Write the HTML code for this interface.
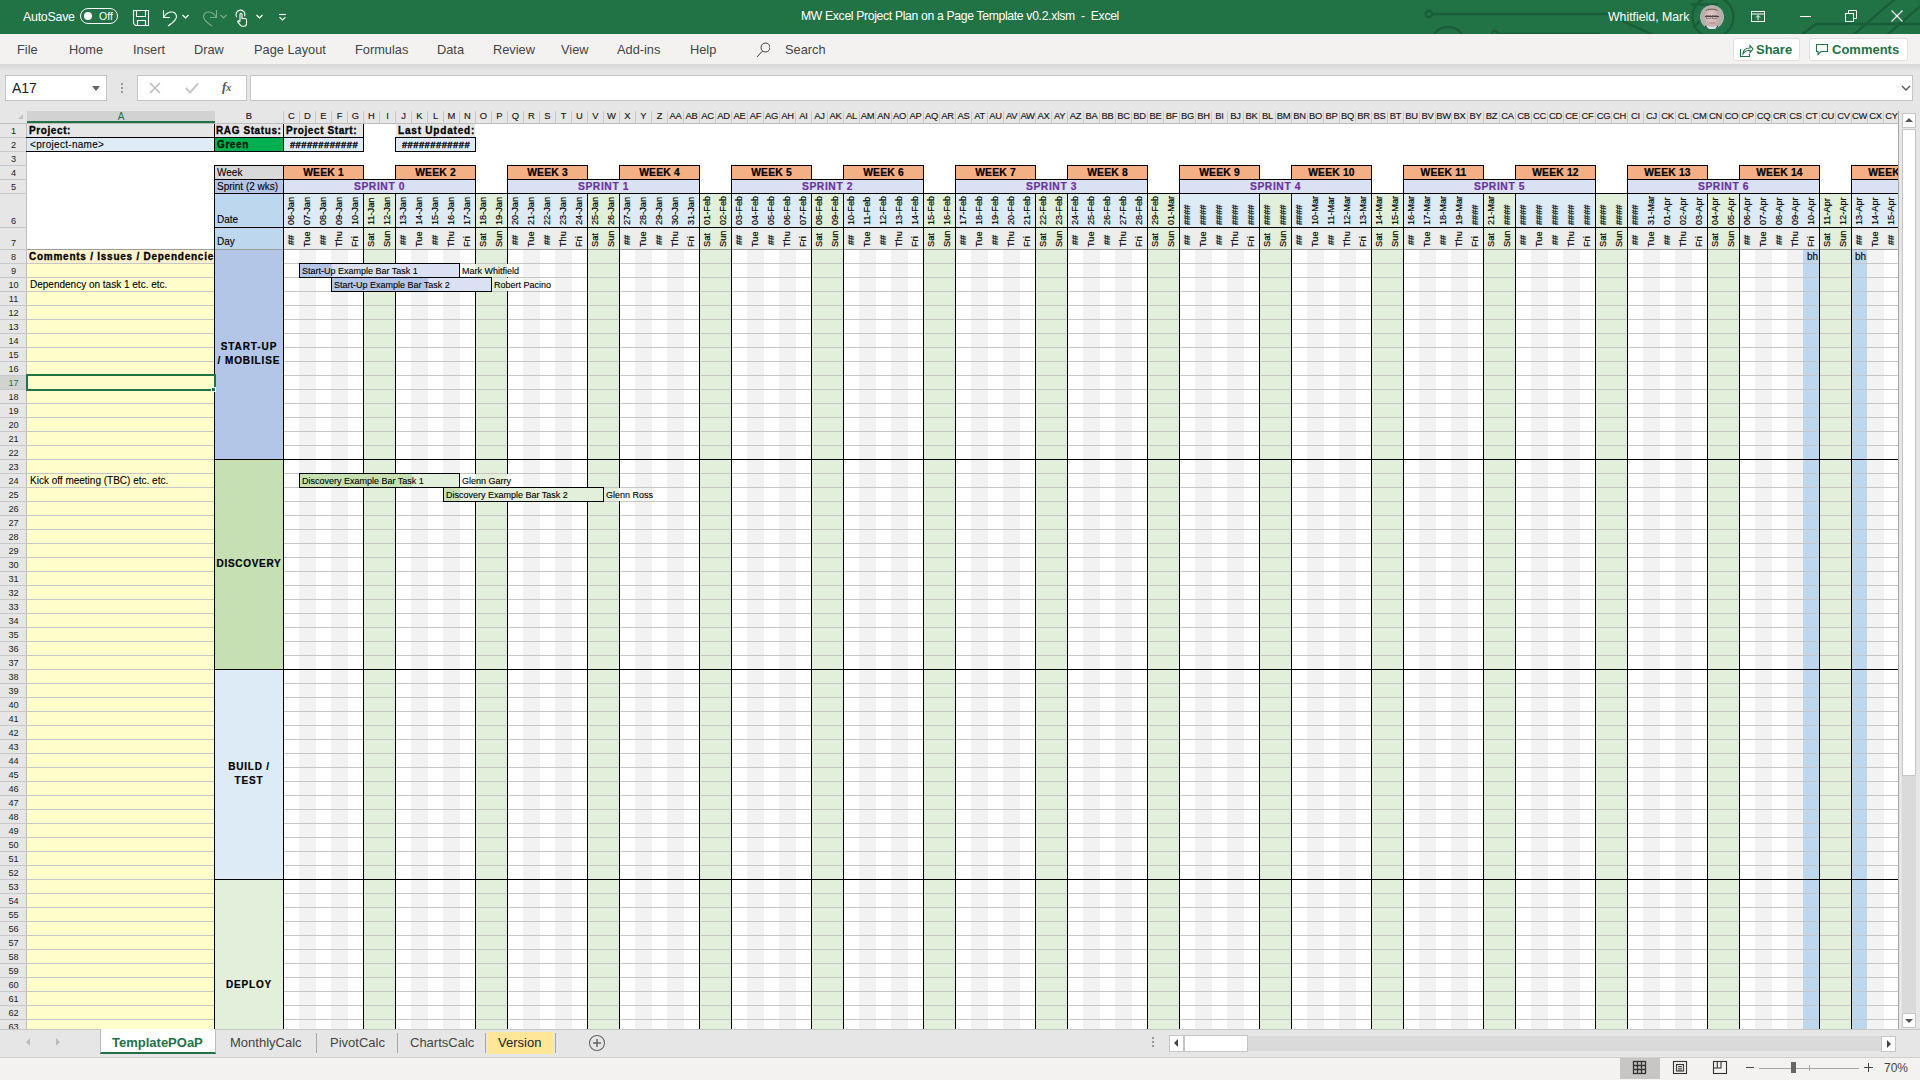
<!DOCTYPE html><html><head><meta charset="utf-8"><style>
*{margin:0;padding:0;box-sizing:border-box}
html,body{width:1920px;height:1080px;overflow:hidden;background:#e6e6e6;font-family:"Liberation Sans",sans-serif}
div{position:absolute}
.ui{font-family:"Liberation Sans",sans-serif}
.ch{top:111px;height:12px;font-size:9.4px;line-height:10.5px;text-align:center;color:#111;border-right:1px solid #c8c8c8;overflow:hidden;white-space:nowrap;-webkit-text-stroke:0.12px #111}
.ch2{letter-spacing:-0.3px}
.rh{left:0;width:27px;font-size:9.2px;text-align:center;color:#222;border-bottom:1px solid #c8c8c8}
.c{font-size:10px;line-height:13px;white-space:nowrap;overflow:hidden;color:#000;-webkit-text-stroke:0.1px #000}
.b{font-weight:bold;letter-spacing:0.6px;-webkit-text-stroke:0.3px #000}
.vl{width:1px;background:#000}
.rot{-webkit-text-stroke:0.15px #000;writing-mode:vertical-rl;transform:rotate(180deg);font-size:9.2px;white-space:nowrap;text-align:left;line-height:16px;color:#000}
</style></head><body>
<div style="left:0px;top:0px;width:1920px;height:34px;background:#217346"></div>
<svg style="position:absolute;left:0;top:0" width="1920" height="34"><g stroke="#1b5d3a" stroke-width="2.4" fill="none"><circle cx="1429" cy="14" r="3.2"/><path d="M1432.5 14 H1607 L1660 38"/><circle cx="1448" cy="44" r="17"/><circle cx="1495" cy="34" r="3"/><path d="M1498 34 H1600"/><circle cx="1713" cy="17" r="20.5"/><path d="M1691 4.5 H1716 L1693 28"/><path d="M1800 36 L1816 24 H1920"/><path d="M1896 -2 L1852 36"/><path d="M1925 2 L1886 36"/></g></svg>
<div style="left:23px;top:9px;font-size:12.4px;letter-spacing:-0.25px;color:#fff;line-height:16px">AutoSave</div>
<div style="left:80px;top:8px;width:38px;height:16px;border:1px solid #fff;border-radius:8px"></div>
<div style="left:84px;top:12px;width:8px;height:8px;border-radius:50%;background:#fff"></div>
<div style="left:99px;top:9px;font-size:10.5px;color:#fff;line-height:14px">Off</div>
<svg style="position:absolute;left:130px;top:7px" width="22" height="22" viewBox="0 0 22 22"><g fill="none" stroke="#fff" stroke-width="1.1"><path d="M3.5 3.5 H18.5 V18.5 H5.5 L3.5 16.5 Z"/><path d="M6.5 3.5 V9.5 H15.5 V3.5"/><path d="M7.5 18.5 V13.5 H15.5 V18.5"/></g></svg>
<svg style="position:absolute;left:160px;top:7px" width="20" height="22" viewBox="0 0 20 22"><g fill="none" stroke="#fff" stroke-width="1.1"><path d="M3.5 3 V10.5 H10"/><path d="M4 10 C7 4 15 3 16.5 9 C17 12 14 15 8 19"/></g></svg>
<svg style="position:absolute;left:181px;top:13px" width="10" height="8"><path d="M1.5 2 L4.5 5 L7.5 2" fill="none" stroke="#fff" stroke-width="1.2"/></svg>
<svg style="position:absolute;left:200px;top:7px;opacity:0.4" width="20" height="22" viewBox="0 0 20 22"><g fill="none" stroke="#fff" stroke-width="1.1"><path d="M16.5 3 V10.5 H10"/><path d="M16 10 C13 4 5 3 3.5 9 C3 12 6 15 12 19"/></g></svg>
<svg style="position:absolute;left:219px;top:13px;opacity:0.4" width="10" height="8"><path d="M1.5 2 L4.5 5 L7.5 2" fill="none" stroke="#fff" stroke-width="1.2"/></svg>
<svg style="position:absolute;left:233px;top:7px" width="18" height="22" viewBox="0 0 18 22"><g fill="none" stroke="#fff" stroke-width="1.1" stroke-linejoin="round"><path d="M3.8 10.2 A4.5 4.5 0 1 1 11.6 9.4"/><path d="M7 14.5 V7.3 Q7 6.2 8 6.2 Q9 6.2 9 7.3 V11.5 H12.3 Q13.5 11.5 13.5 12.7 V16.8 Q13.5 19.2 11 19.2 H9.2 Q8.2 19.2 7.6 18.4 L4.9 15.2 Q4.4 14.4 5.2 14 Q5.9 13.7 6.4 14.2 L7 14.8"/></g></svg>
<svg style="position:absolute;left:255px;top:13px" width="10" height="8"><path d="M1.5 2 L4.5 5 L7.5 2" fill="none" stroke="#fff" stroke-width="1.2"/></svg>
<svg style="position:absolute;left:276px;top:9px" width="12" height="14"><g fill="none" stroke="#fff" stroke-width="1.1"><path d="M3 5.5 H10"/><path d="M3.5 8.2 L6.5 11 L9.5 8.2"/></g></svg>
<div style="left:801px;top:8px;font-size:12.2px;letter-spacing:-0.33px;color:#fff;line-height:16px"><span>MW Excel Project Plan on a Page Template v0.2.xlsm&nbsp; -&nbsp; Excel</span></div>
<div style="left:1608px;top:9px;font-size:12.3px;color:#fff;line-height:16px">Whitfield, Mark</div>
<svg style="position:absolute;left:1700px;top:5px" width="24" height="24"><defs><clipPath id="av"><circle cx="12" cy="12" r="12"/></clipPath><radialGradient id="fg" cx="0.45" cy="0.45" r="0.6"><stop offset="0" stop-color="#e2cccc"/><stop offset="1" stop-color="#c9a9a6"/></radialGradient></defs><g clip-path="url(#av)"><rect width="24" height="24" fill="#b3b1ae"/><ellipse cx="11.8" cy="12" rx="6.8" ry="9.5" fill="url(#fg)"/><path d="M5.5 6 C6 3 17 2.5 18 6 C16 4.5 8 4.5 5.5 6Z" fill="#7a6e6a"/><path d="M5 11.5 H19" stroke="#4a3a3a" stroke-width="1.2"/><rect x="6.5" y="10.5" width="4.5" height="3" fill="none" stroke="#6a5555" stroke-width="0.6"/><rect x="12.5" y="10.5" width="4.5" height="3" fill="none" stroke="#6a5555" stroke-width="0.6"/><path d="M9 18 H15" stroke="#b08080" stroke-width="1"/><path d="M3 24 C5 20 8 21 12 22 C16 21 19 20 21 24Z" fill="#dde0ee"/><path d="M5 21 L8 24 M18 21 L16 24" stroke="#223" stroke-width="1.3"/></g></svg>
<svg style="position:absolute;left:1750px;top:9px" width="16" height="16"><g fill="none" stroke="#fff" stroke-width="1"><rect x="1.5" y="2.5" width="13" height="10"/><path d="M1.5 5 H14.5"/><path d="M8 11 V6.5 M6 8.5 L8 6.5 L10 8.5"/></g></svg>
<div style="left:1800px;top:16px;width:11px;height:1px;background:#fff"></div>
<svg style="position:absolute;left:1844px;top:9px" width="14" height="14"><g fill="none" stroke="#fff" stroke-width="1"><rect x="1.5" y="4.5" width="8" height="8"/><path d="M4.5 4.5 V1.5 H12.5 V9.5 H9.5"/></g></svg>
<svg style="position:absolute;left:1890px;top:9px" width="14" height="14"><g fill="none" stroke="#fff" stroke-width="1.1"><path d="M1.5 1.5 L12.5 12.5 M12.5 1.5 L1.5 12.5"/></g></svg>
<div style="left:0px;top:34px;width:1920px;height:30px;background:#f3f2f1"></div>
<div style="left:0px;top:64px;width:1920px;height:7px;background:linear-gradient(#d6d6d6,#e6e6e6)"></div>
<div style="left:17px;top:41px;font-size:12.8px;color:#444;line-height:18px">File</div>
<div style="left:69px;top:41px;font-size:12.8px;color:#444;line-height:18px">Home</div>
<div style="left:133px;top:41px;font-size:12.8px;color:#444;line-height:18px">Insert</div>
<div style="left:194px;top:41px;font-size:12.8px;color:#444;line-height:18px">Draw</div>
<div style="left:254px;top:41px;font-size:12.8px;color:#444;line-height:18px">Page Layout</div>
<div style="left:355px;top:41px;font-size:12.8px;color:#444;line-height:18px">Formulas</div>
<div style="left:437px;top:41px;font-size:12.8px;color:#444;line-height:18px">Data</div>
<div style="left:493px;top:41px;font-size:12.8px;color:#444;line-height:18px">Review</div>
<div style="left:561px;top:41px;font-size:12.8px;color:#444;line-height:18px">View</div>
<div style="left:617px;top:41px;font-size:12.8px;color:#444;line-height:18px">Add-ins</div>
<div style="left:690px;top:41px;font-size:12.8px;color:#444;line-height:18px">Help</div>
<div style="left:785px;top:41px;font-size:12.8px;color:#444;line-height:18px">Search</div>
<svg style="position:absolute;left:754px;top:40px" width="16" height="18"><g fill="none" stroke="#3b3a39" stroke-width="1"><circle cx="11.5" cy="7.5" r="4.5"/><path d="M8.5 11 L3 17"/></g></svg>
<div style="left:1733px;top:38px;width:67px;height:23px;background:#fff;border:1px solid #e1dfdd;border-radius:3px"></div>
<div style="left:1756px;top:41px;font-size:13px;font-weight:bold;color:#217346;line-height:17px">Share</div>
<svg style="position:absolute;left:1738px;top:42px" width="16" height="16"><g fill="none" stroke="#217346" stroke-width="1.1"><path d="M2.5 7 V14.5 H11.5 V12"/><path d="M5 12 C5 8 8 6 12 6 V3.5 L15 7 L12 10.5 V8.3 C9 8.3 6.5 9.5 5 12Z"/></g></svg>
<div style="left:1809px;top:38px;width:99px;height:23px;background:#fff;border:1px solid #e1dfdd;border-radius:3px"></div>
<div style="left:1832px;top:41px;font-size:13px;font-weight:bold;color:#217346;line-height:17px">Comments</div>
<svg style="position:absolute;left:1815px;top:42px" width="16" height="16"><g fill="none" stroke="#217346" stroke-width="1.1"><path d="M1.5 2.5 H12.5 V9.5 H6 L3 12.5 V9.5 H1.5 Z"/></g></svg>
<div style="left:5px;top:75px;width:102px;height:26px;background:#fff;border:1px solid #c6c6c6"></div>
<div style="left:12px;top:80px;font-size:14px;color:#222;line-height:17px">A17</div>
<div style="left:92px;top:86px;width:0;height:0;border-left:4.5px solid transparent;border-right:4.5px solid transparent;border-top:5px solid #666"></div>
<div style="left:121px;top:83px;width:2px;height:2px;background:#999"></div>
<div style="left:121px;top:87px;width:2px;height:2px;background:#999"></div>
<div style="left:121px;top:91px;width:2px;height:2px;background:#999"></div>
<div style="left:137px;top:75px;width:110px;height:26px;background:#fff;border:1px solid #c6c6c6"></div>
<svg style="position:absolute;left:149px;top:82px" width="12" height="12"><path d="M1 1 L11 11 M11 1 L1 11" stroke="#bdbdbd" stroke-width="1.5" fill="none"/></svg>
<svg style="position:absolute;left:185px;top:82px" width="14" height="12"><path d="M1 6 L5 10.5 L13 1.5" stroke="#cacaca" stroke-width="2.3" fill="none"/></svg>
<div style="left:222px;top:79px;font-size:13px;font-style:italic;font-weight:bold;font-family:'Liberation Serif',serif;color:#555;line-height:16px">f<span style="font-size:10px">x</span></div>
<div style="left:250px;top:75px;width:1663px;height:26px;background:#fff;border:1px solid #c6c6c6"></div>
<svg style="position:absolute;left:1900px;top:84px" width="12" height="8"><path d="M2 2 L6 6 L10 2" stroke="#555" stroke-width="1.4" fill="none"/></svg>
<div style="left:27px;top:124px;width:1871px;height:905px;background:#fff"></div>
<div style="left:0px;top:111px;width:1898px;height:12px;background:#e6e6e6"></div>
<div style="left:27px;top:111px;width:188px;height:12px;background:#d2d2d2;border-bottom:2px solid #217346;color:#217346;font-size:10px;line-height:11px;text-align:center">A</div>
<div style="left:215px;top:111px;width:69px;height:12px;border-right:1px solid #c8c8c8;font-size:9.4px;line-height:10.5px;text-align:center;color:#111;-webkit-text-stroke:0.12px #111">B</div>
<div class="ch" style="left:284px;width:16px">C</div>
<div class="ch" style="left:300px;width:16px">D</div>
<div class="ch" style="left:316px;width:16px">E</div>
<div class="ch" style="left:332px;width:16px">F</div>
<div class="ch" style="left:348px;width:16px">G</div>
<div class="ch" style="left:364px;width:16px">H</div>
<div class="ch" style="left:380px;width:16px">I</div>
<div class="ch" style="left:396px;width:16px">J</div>
<div class="ch" style="left:412px;width:16px">K</div>
<div class="ch" style="left:428px;width:16px">L</div>
<div class="ch" style="left:444px;width:16px">M</div>
<div class="ch" style="left:460px;width:16px">N</div>
<div class="ch" style="left:476px;width:16px">O</div>
<div class="ch" style="left:492px;width:16px">P</div>
<div class="ch" style="left:508px;width:16px">Q</div>
<div class="ch" style="left:524px;width:16px">R</div>
<div class="ch" style="left:540px;width:16px">S</div>
<div class="ch" style="left:556px;width:16px">T</div>
<div class="ch" style="left:572px;width:16px">U</div>
<div class="ch" style="left:588px;width:16px">V</div>
<div class="ch" style="left:604px;width:16px">W</div>
<div class="ch" style="left:620px;width:16px">X</div>
<div class="ch" style="left:636px;width:16px">Y</div>
<div class="ch" style="left:652px;width:16px">Z</div>
<div class="ch ch2" style="left:668px;width:16px">AA</div>
<div class="ch ch2" style="left:684px;width:16px">AB</div>
<div class="ch ch2" style="left:700px;width:16px">AC</div>
<div class="ch ch2" style="left:716px;width:16px">AD</div>
<div class="ch ch2" style="left:732px;width:16px">AE</div>
<div class="ch ch2" style="left:748px;width:16px">AF</div>
<div class="ch ch2" style="left:764px;width:16px">AG</div>
<div class="ch ch2" style="left:780px;width:16px">AH</div>
<div class="ch ch2" style="left:796px;width:16px">AI</div>
<div class="ch ch2" style="left:812px;width:16px">AJ</div>
<div class="ch ch2" style="left:828px;width:16px">AK</div>
<div class="ch ch2" style="left:844px;width:16px">AL</div>
<div class="ch ch2" style="left:860px;width:16px">AM</div>
<div class="ch ch2" style="left:876px;width:16px">AN</div>
<div class="ch ch2" style="left:892px;width:16px">AO</div>
<div class="ch ch2" style="left:908px;width:16px">AP</div>
<div class="ch ch2" style="left:924px;width:16px">AQ</div>
<div class="ch ch2" style="left:940px;width:16px">AR</div>
<div class="ch ch2" style="left:956px;width:16px">AS</div>
<div class="ch ch2" style="left:972px;width:16px">AT</div>
<div class="ch ch2" style="left:988px;width:16px">AU</div>
<div class="ch ch2" style="left:1004px;width:16px">AV</div>
<div class="ch ch2" style="left:1020px;width:16px">AW</div>
<div class="ch ch2" style="left:1036px;width:16px">AX</div>
<div class="ch ch2" style="left:1052px;width:16px">AY</div>
<div class="ch ch2" style="left:1068px;width:16px">AZ</div>
<div class="ch ch2" style="left:1084px;width:16px">BA</div>
<div class="ch ch2" style="left:1100px;width:16px">BB</div>
<div class="ch ch2" style="left:1116px;width:16px">BC</div>
<div class="ch ch2" style="left:1132px;width:16px">BD</div>
<div class="ch ch2" style="left:1148px;width:16px">BE</div>
<div class="ch ch2" style="left:1164px;width:16px">BF</div>
<div class="ch ch2" style="left:1180px;width:16px">BG</div>
<div class="ch ch2" style="left:1196px;width:16px">BH</div>
<div class="ch ch2" style="left:1212px;width:16px">BI</div>
<div class="ch ch2" style="left:1228px;width:16px">BJ</div>
<div class="ch ch2" style="left:1244px;width:16px">BK</div>
<div class="ch ch2" style="left:1260px;width:16px">BL</div>
<div class="ch ch2" style="left:1276px;width:16px">BM</div>
<div class="ch ch2" style="left:1292px;width:16px">BN</div>
<div class="ch ch2" style="left:1308px;width:16px">BO</div>
<div class="ch ch2" style="left:1324px;width:16px">BP</div>
<div class="ch ch2" style="left:1340px;width:16px">BQ</div>
<div class="ch ch2" style="left:1356px;width:16px">BR</div>
<div class="ch ch2" style="left:1372px;width:16px">BS</div>
<div class="ch ch2" style="left:1388px;width:16px">BT</div>
<div class="ch ch2" style="left:1404px;width:16px">BU</div>
<div class="ch ch2" style="left:1420px;width:16px">BV</div>
<div class="ch ch2" style="left:1436px;width:16px">BW</div>
<div class="ch ch2" style="left:1452px;width:16px">BX</div>
<div class="ch ch2" style="left:1468px;width:16px">BY</div>
<div class="ch ch2" style="left:1484px;width:16px">BZ</div>
<div class="ch ch2" style="left:1500px;width:16px">CA</div>
<div class="ch ch2" style="left:1516px;width:16px">CB</div>
<div class="ch ch2" style="left:1532px;width:16px">CC</div>
<div class="ch ch2" style="left:1548px;width:16px">CD</div>
<div class="ch ch2" style="left:1564px;width:16px">CE</div>
<div class="ch ch2" style="left:1580px;width:16px">CF</div>
<div class="ch ch2" style="left:1596px;width:16px">CG</div>
<div class="ch ch2" style="left:1612px;width:16px">CH</div>
<div class="ch ch2" style="left:1628px;width:16px">CI</div>
<div class="ch ch2" style="left:1644px;width:16px">CJ</div>
<div class="ch ch2" style="left:1660px;width:16px">CK</div>
<div class="ch ch2" style="left:1676px;width:16px">CL</div>
<div class="ch ch2" style="left:1692px;width:16px">CM</div>
<div class="ch ch2" style="left:1708px;width:16px">CN</div>
<div class="ch ch2" style="left:1724px;width:16px">CO</div>
<div class="ch ch2" style="left:1740px;width:16px">CP</div>
<div class="ch ch2" style="left:1756px;width:16px">CQ</div>
<div class="ch ch2" style="left:1772px;width:16px">CR</div>
<div class="ch ch2" style="left:1788px;width:16px">CS</div>
<div class="ch ch2" style="left:1804px;width:16px">CT</div>
<div class="ch ch2" style="left:1820px;width:16px">CU</div>
<div class="ch ch2" style="left:1836px;width:16px">CV</div>
<div class="ch ch2" style="left:1852px;width:16px">CW</div>
<div class="ch ch2" style="left:1868px;width:16px">CX</div>
<div class="ch ch2" style="left:1884px;width:16px">CY</div>
<div style="left:0px;top:123px;width:1898px;height:1px;background:#bdbdbd"></div>
<div style="left:18px;top:114px;width:0;height:0;border-left:5px solid transparent;border-bottom:5px solid #c2c2c2"></div>
<div style="left:0px;top:124px;width:27px;height:905px;background:#e6e6e6;border-right:1px solid #bdbdbd"></div>
<div class="rh" style="top:124px;height:14px;line-height:15px;">1</div>
<div class="rh" style="top:138px;height:14px;line-height:15px;">2</div>
<div class="rh" style="top:152px;height:14px;line-height:15px;">3</div>
<div class="rh" style="top:166px;height:14px;line-height:15px;">4</div>
<div class="rh" style="top:180px;height:14px;line-height:15px;">5</div>
<div class="rh" style="top:194px;height:34px;line-height:34px;padding-top:20px;line-height:14px;">6</div>
<div class="rh" style="top:228px;height:22px;line-height:22px;padding-top:8px;line-height:14px;">7</div>
<div class="rh" style="top:250px;height:14px;line-height:15px;">8</div>
<div class="rh" style="top:264px;height:14px;line-height:15px;">9</div>
<div class="rh" style="top:278px;height:14px;line-height:15px;">10</div>
<div class="rh" style="top:292px;height:14px;line-height:15px;">11</div>
<div class="rh" style="top:306px;height:14px;line-height:15px;">12</div>
<div class="rh" style="top:320px;height:14px;line-height:15px;">13</div>
<div class="rh" style="top:334px;height:14px;line-height:15px;">14</div>
<div class="rh" style="top:348px;height:14px;line-height:15px;">15</div>
<div class="rh" style="top:362px;height:14px;line-height:15px;">16</div>
<div class="rh" style="top:376px;height:14px;line-height:15px;background:#d2d2d2;color:#217346;">17</div>
<div class="rh" style="top:390px;height:14px;line-height:15px;">18</div>
<div class="rh" style="top:404px;height:14px;line-height:15px;">19</div>
<div class="rh" style="top:418px;height:14px;line-height:15px;">20</div>
<div class="rh" style="top:432px;height:14px;line-height:15px;">21</div>
<div class="rh" style="top:446px;height:14px;line-height:15px;">22</div>
<div class="rh" style="top:460px;height:14px;line-height:15px;">23</div>
<div class="rh" style="top:474px;height:14px;line-height:15px;">24</div>
<div class="rh" style="top:488px;height:14px;line-height:15px;">25</div>
<div class="rh" style="top:502px;height:14px;line-height:15px;">26</div>
<div class="rh" style="top:516px;height:14px;line-height:15px;">27</div>
<div class="rh" style="top:530px;height:14px;line-height:15px;">28</div>
<div class="rh" style="top:544px;height:14px;line-height:15px;">29</div>
<div class="rh" style="top:558px;height:14px;line-height:15px;">30</div>
<div class="rh" style="top:572px;height:14px;line-height:15px;">31</div>
<div class="rh" style="top:586px;height:14px;line-height:15px;">32</div>
<div class="rh" style="top:600px;height:14px;line-height:15px;">33</div>
<div class="rh" style="top:614px;height:14px;line-height:15px;">34</div>
<div class="rh" style="top:628px;height:14px;line-height:15px;">35</div>
<div class="rh" style="top:642px;height:14px;line-height:15px;">36</div>
<div class="rh" style="top:656px;height:14px;line-height:15px;">37</div>
<div class="rh" style="top:670px;height:14px;line-height:15px;">38</div>
<div class="rh" style="top:684px;height:14px;line-height:15px;">39</div>
<div class="rh" style="top:698px;height:14px;line-height:15px;">40</div>
<div class="rh" style="top:712px;height:14px;line-height:15px;">41</div>
<div class="rh" style="top:726px;height:14px;line-height:15px;">42</div>
<div class="rh" style="top:740px;height:14px;line-height:15px;">43</div>
<div class="rh" style="top:754px;height:14px;line-height:15px;">44</div>
<div class="rh" style="top:768px;height:14px;line-height:15px;">45</div>
<div class="rh" style="top:782px;height:14px;line-height:15px;">46</div>
<div class="rh" style="top:796px;height:14px;line-height:15px;">47</div>
<div class="rh" style="top:810px;height:14px;line-height:15px;">48</div>
<div class="rh" style="top:824px;height:14px;line-height:15px;">49</div>
<div class="rh" style="top:838px;height:14px;line-height:15px;">50</div>
<div class="rh" style="top:852px;height:14px;line-height:15px;">51</div>
<div class="rh" style="top:866px;height:14px;line-height:15px;">52</div>
<div class="rh" style="top:880px;height:14px;line-height:15px;">53</div>
<div class="rh" style="top:894px;height:14px;line-height:15px;">54</div>
<div class="rh" style="top:908px;height:14px;line-height:15px;">55</div>
<div class="rh" style="top:922px;height:14px;line-height:15px;">56</div>
<div class="rh" style="top:936px;height:14px;line-height:15px;">57</div>
<div class="rh" style="top:950px;height:14px;line-height:15px;">58</div>
<div class="rh" style="top:964px;height:14px;line-height:15px;">59</div>
<div class="rh" style="top:978px;height:14px;line-height:15px;">60</div>
<div class="rh" style="top:992px;height:14px;line-height:15px;">61</div>
<div class="rh" style="top:1006px;height:14px;line-height:15px;">62</div>
<div class="rh" style="top:1020px;height:14px;line-height:15px;">63</div>
<div style="left:0;top:0;width:1898px;height:1029px;overflow:hidden">
<div style="left:299px;top:250px;width:17px;height:779px;background:#f2f2f2"></div>
<div style="left:331px;top:250px;width:17px;height:779px;background:#f2f2f2"></div>
<div style="left:363px;top:250px;width:16px;height:779px;background:#e2efda"></div>
<div style="left:379px;top:250px;width:16px;height:779px;background:#e2efda"></div>
<div style="left:411px;top:250px;width:17px;height:779px;background:#f2f2f2"></div>
<div style="left:443px;top:250px;width:17px;height:779px;background:#f2f2f2"></div>
<div style="left:475px;top:250px;width:16px;height:779px;background:#e2efda"></div>
<div style="left:491px;top:250px;width:16px;height:779px;background:#e2efda"></div>
<div style="left:523px;top:250px;width:17px;height:779px;background:#f2f2f2"></div>
<div style="left:555px;top:250px;width:17px;height:779px;background:#f2f2f2"></div>
<div style="left:587px;top:250px;width:16px;height:779px;background:#e2efda"></div>
<div style="left:603px;top:250px;width:16px;height:779px;background:#e2efda"></div>
<div style="left:635px;top:250px;width:17px;height:779px;background:#f2f2f2"></div>
<div style="left:667px;top:250px;width:17px;height:779px;background:#f2f2f2"></div>
<div style="left:699px;top:250px;width:16px;height:779px;background:#e2efda"></div>
<div style="left:715px;top:250px;width:16px;height:779px;background:#e2efda"></div>
<div style="left:747px;top:250px;width:17px;height:779px;background:#f2f2f2"></div>
<div style="left:779px;top:250px;width:17px;height:779px;background:#f2f2f2"></div>
<div style="left:811px;top:250px;width:16px;height:779px;background:#e2efda"></div>
<div style="left:827px;top:250px;width:16px;height:779px;background:#e2efda"></div>
<div style="left:859px;top:250px;width:17px;height:779px;background:#f2f2f2"></div>
<div style="left:891px;top:250px;width:17px;height:779px;background:#f2f2f2"></div>
<div style="left:923px;top:250px;width:16px;height:779px;background:#e2efda"></div>
<div style="left:939px;top:250px;width:16px;height:779px;background:#e2efda"></div>
<div style="left:971px;top:250px;width:17px;height:779px;background:#f2f2f2"></div>
<div style="left:1003px;top:250px;width:17px;height:779px;background:#f2f2f2"></div>
<div style="left:1035px;top:250px;width:16px;height:779px;background:#e2efda"></div>
<div style="left:1051px;top:250px;width:16px;height:779px;background:#e2efda"></div>
<div style="left:1083px;top:250px;width:17px;height:779px;background:#f2f2f2"></div>
<div style="left:1115px;top:250px;width:17px;height:779px;background:#f2f2f2"></div>
<div style="left:1147px;top:250px;width:16px;height:779px;background:#e2efda"></div>
<div style="left:1163px;top:250px;width:16px;height:779px;background:#e2efda"></div>
<div style="left:1195px;top:250px;width:17px;height:779px;background:#f2f2f2"></div>
<div style="left:1227px;top:250px;width:17px;height:779px;background:#f2f2f2"></div>
<div style="left:1259px;top:250px;width:16px;height:779px;background:#e2efda"></div>
<div style="left:1275px;top:250px;width:16px;height:779px;background:#e2efda"></div>
<div style="left:1307px;top:250px;width:17px;height:779px;background:#f2f2f2"></div>
<div style="left:1339px;top:250px;width:17px;height:779px;background:#f2f2f2"></div>
<div style="left:1371px;top:250px;width:16px;height:779px;background:#e2efda"></div>
<div style="left:1387px;top:250px;width:16px;height:779px;background:#e2efda"></div>
<div style="left:1419px;top:250px;width:17px;height:779px;background:#f2f2f2"></div>
<div style="left:1451px;top:250px;width:17px;height:779px;background:#f2f2f2"></div>
<div style="left:1483px;top:250px;width:16px;height:779px;background:#e2efda"></div>
<div style="left:1499px;top:250px;width:16px;height:779px;background:#e2efda"></div>
<div style="left:1531px;top:250px;width:17px;height:779px;background:#f2f2f2"></div>
<div style="left:1563px;top:250px;width:17px;height:779px;background:#f2f2f2"></div>
<div style="left:1595px;top:250px;width:16px;height:779px;background:#e2efda"></div>
<div style="left:1611px;top:250px;width:16px;height:779px;background:#e2efda"></div>
<div style="left:1643px;top:250px;width:17px;height:779px;background:#f2f2f2"></div>
<div style="left:1675px;top:250px;width:17px;height:779px;background:#f2f2f2"></div>
<div style="left:1707px;top:250px;width:16px;height:779px;background:#e2efda"></div>
<div style="left:1723px;top:250px;width:16px;height:779px;background:#e2efda"></div>
<div style="left:1755px;top:250px;width:17px;height:779px;background:#f2f2f2"></div>
<div style="left:1787px;top:250px;width:17px;height:779px;background:#f2f2f2"></div>
<div style="left:1803px;top:250px;width:16px;height:779px;background:#bdd7ee"></div>
<div style="left:1819px;top:250px;width:16px;height:779px;background:#e2efda"></div>
<div style="left:1835px;top:250px;width:16px;height:779px;background:#e2efda"></div>
<div style="left:1851px;top:250px;width:16px;height:779px;background:#bdd7ee"></div>
<div style="left:1867px;top:250px;width:17px;height:779px;background:#f2f2f2"></div>
<div style="left:27px;top:250px;width:187px;height:779px;background:#ffffcc"></div>
<div style="left:27px;top:250px;width:187px;height:13px;background:#fff2cc"></div>
<div style="left:214px;top:249px;width:70px;height:210px;background:#b4c6e7;border-left:1px solid #000;border-right:1px solid #000"></div>
<div style="left:214px;top:459px;width:70px;height:210px;background:#c6e0b4;border-left:1px solid #000;border-right:1px solid #000"></div>
<div style="left:214px;top:669px;width:70px;height:210px;background:#ddebf7;border-left:1px solid #000;border-right:1px solid #000"></div>
<div style="left:214px;top:879px;width:70px;height:150px;background:#e2efda;border-left:1px solid #000;border-right:1px solid #000"></div>
<div style="left:27px;top:250px;width:187px;height:779px;background:repeating-linear-gradient(to bottom,transparent 0,transparent 13px,#c6c6c6 13px,#c6c6c6 14px)"></div>
<div style="left:284px;top:250px;width:1614px;height:779px;background:repeating-linear-gradient(to bottom,transparent 0,transparent 13px,#c6c6c6 13px,#c6c6c6 14px)"></div>
<div style="left:214px;top:459px;width:1684px;height:1px;background:#000"></div>
<div style="left:214px;top:669px;width:1684px;height:1px;background:#000"></div>
<div style="left:214px;top:879px;width:1684px;height:1px;background:#000"></div>
<div style="left:27px;top:249px;width:1871px;height:1px;background:#9c9c9c"></div>
<div style="left:283px;top:194px;width:16px;height:33px;background:#ddebf7"></div>
<div style="left:283px;top:228px;width:16px;height:21px;background:#ededed"></div>
<div class="rot" style="left:283px;top:192.5px;width:16px;height:32px">06-Jan</div>
<div class="rot" style="left:283px;top:224.5px;width:16px;height:20px">##</div>
<div style="left:299px;top:194px;width:16px;height:33px;background:#ddebf7"></div>
<div style="left:299px;top:228px;width:16px;height:21px;background:#ededed"></div>
<div class="rot" style="left:299px;top:192.5px;width:16px;height:32px">07-Jan</div>
<div class="rot" style="left:299px;top:226.5px;width:16px;height:20px">Tue</div>
<div style="left:315px;top:194px;width:16px;height:33px;background:#ddebf7"></div>
<div style="left:315px;top:228px;width:16px;height:21px;background:#ededed"></div>
<div class="rot" style="left:315px;top:192.5px;width:16px;height:32px">08-Jan</div>
<div class="rot" style="left:315px;top:224.5px;width:16px;height:20px">##</div>
<div style="left:331px;top:194px;width:16px;height:33px;background:#ddebf7"></div>
<div style="left:331px;top:228px;width:16px;height:21px;background:#ededed"></div>
<div class="rot" style="left:331px;top:192.5px;width:16px;height:32px">09-Jan</div>
<div class="rot" style="left:331px;top:226.5px;width:16px;height:20px">Thu</div>
<div style="left:347px;top:194px;width:16px;height:33px;background:#ddebf7"></div>
<div style="left:347px;top:228px;width:16px;height:21px;background:#ededed"></div>
<div class="rot" style="left:347px;top:192.5px;width:16px;height:32px">10-Jan</div>
<div class="rot" style="left:347px;top:226.5px;width:16px;height:20px">Fri</div>
<div style="left:363px;top:194px;width:16px;height:33px;background:#e2efda"></div>
<div style="left:363px;top:228px;width:16px;height:21px;background:#e2efda"></div>
<div class="rot" style="left:363px;top:192.5px;width:16px;height:32px">11-Jan</div>
<div class="rot" style="left:363px;top:226.5px;width:16px;height:20px">Sat</div>
<div style="left:379px;top:194px;width:16px;height:33px;background:#e2efda"></div>
<div style="left:379px;top:228px;width:16px;height:21px;background:#e2efda"></div>
<div class="rot" style="left:379px;top:192.5px;width:16px;height:32px">12-Jan</div>
<div class="rot" style="left:379px;top:226.5px;width:16px;height:20px">Sun</div>
<div style="left:395px;top:194px;width:16px;height:33px;background:#ddebf7"></div>
<div style="left:395px;top:228px;width:16px;height:21px;background:#ededed"></div>
<div class="rot" style="left:395px;top:192.5px;width:16px;height:32px">13-Jan</div>
<div class="rot" style="left:395px;top:224.5px;width:16px;height:20px">##</div>
<div style="left:411px;top:194px;width:16px;height:33px;background:#ddebf7"></div>
<div style="left:411px;top:228px;width:16px;height:21px;background:#ededed"></div>
<div class="rot" style="left:411px;top:192.5px;width:16px;height:32px">14-Jan</div>
<div class="rot" style="left:411px;top:226.5px;width:16px;height:20px">Tue</div>
<div style="left:427px;top:194px;width:16px;height:33px;background:#ddebf7"></div>
<div style="left:427px;top:228px;width:16px;height:21px;background:#ededed"></div>
<div class="rot" style="left:427px;top:192.5px;width:16px;height:32px">15-Jan</div>
<div class="rot" style="left:427px;top:224.5px;width:16px;height:20px">##</div>
<div style="left:443px;top:194px;width:16px;height:33px;background:#ddebf7"></div>
<div style="left:443px;top:228px;width:16px;height:21px;background:#ededed"></div>
<div class="rot" style="left:443px;top:192.5px;width:16px;height:32px">16-Jan</div>
<div class="rot" style="left:443px;top:226.5px;width:16px;height:20px">Thu</div>
<div style="left:459px;top:194px;width:16px;height:33px;background:#ddebf7"></div>
<div style="left:459px;top:228px;width:16px;height:21px;background:#ededed"></div>
<div class="rot" style="left:459px;top:192.5px;width:16px;height:32px">17-Jan</div>
<div class="rot" style="left:459px;top:226.5px;width:16px;height:20px">Fri</div>
<div style="left:475px;top:194px;width:16px;height:33px;background:#e2efda"></div>
<div style="left:475px;top:228px;width:16px;height:21px;background:#e2efda"></div>
<div class="rot" style="left:475px;top:192.5px;width:16px;height:32px">18-Jan</div>
<div class="rot" style="left:475px;top:226.5px;width:16px;height:20px">Sat</div>
<div style="left:491px;top:194px;width:16px;height:33px;background:#e2efda"></div>
<div style="left:491px;top:228px;width:16px;height:21px;background:#e2efda"></div>
<div class="rot" style="left:491px;top:192.5px;width:16px;height:32px">19-Jan</div>
<div class="rot" style="left:491px;top:226.5px;width:16px;height:20px">Sun</div>
<div style="left:507px;top:194px;width:16px;height:33px;background:#ddebf7"></div>
<div style="left:507px;top:228px;width:16px;height:21px;background:#ededed"></div>
<div class="rot" style="left:507px;top:192.5px;width:16px;height:32px">20-Jan</div>
<div class="rot" style="left:507px;top:224.5px;width:16px;height:20px">##</div>
<div style="left:523px;top:194px;width:16px;height:33px;background:#ddebf7"></div>
<div style="left:523px;top:228px;width:16px;height:21px;background:#ededed"></div>
<div class="rot" style="left:523px;top:192.5px;width:16px;height:32px">21-Jan</div>
<div class="rot" style="left:523px;top:226.5px;width:16px;height:20px">Tue</div>
<div style="left:539px;top:194px;width:16px;height:33px;background:#ddebf7"></div>
<div style="left:539px;top:228px;width:16px;height:21px;background:#ededed"></div>
<div class="rot" style="left:539px;top:192.5px;width:16px;height:32px">22-Jan</div>
<div class="rot" style="left:539px;top:224.5px;width:16px;height:20px">##</div>
<div style="left:555px;top:194px;width:16px;height:33px;background:#ddebf7"></div>
<div style="left:555px;top:228px;width:16px;height:21px;background:#ededed"></div>
<div class="rot" style="left:555px;top:192.5px;width:16px;height:32px">23-Jan</div>
<div class="rot" style="left:555px;top:226.5px;width:16px;height:20px">Thu</div>
<div style="left:571px;top:194px;width:16px;height:33px;background:#ddebf7"></div>
<div style="left:571px;top:228px;width:16px;height:21px;background:#ededed"></div>
<div class="rot" style="left:571px;top:192.5px;width:16px;height:32px">24-Jan</div>
<div class="rot" style="left:571px;top:226.5px;width:16px;height:20px">Fri</div>
<div style="left:587px;top:194px;width:16px;height:33px;background:#e2efda"></div>
<div style="left:587px;top:228px;width:16px;height:21px;background:#e2efda"></div>
<div class="rot" style="left:587px;top:192.5px;width:16px;height:32px">25-Jan</div>
<div class="rot" style="left:587px;top:226.5px;width:16px;height:20px">Sat</div>
<div style="left:603px;top:194px;width:16px;height:33px;background:#e2efda"></div>
<div style="left:603px;top:228px;width:16px;height:21px;background:#e2efda"></div>
<div class="rot" style="left:603px;top:192.5px;width:16px;height:32px">26-Jan</div>
<div class="rot" style="left:603px;top:226.5px;width:16px;height:20px">Sun</div>
<div style="left:619px;top:194px;width:16px;height:33px;background:#ddebf7"></div>
<div style="left:619px;top:228px;width:16px;height:21px;background:#ededed"></div>
<div class="rot" style="left:619px;top:192.5px;width:16px;height:32px">27-Jan</div>
<div class="rot" style="left:619px;top:224.5px;width:16px;height:20px">##</div>
<div style="left:635px;top:194px;width:16px;height:33px;background:#ddebf7"></div>
<div style="left:635px;top:228px;width:16px;height:21px;background:#ededed"></div>
<div class="rot" style="left:635px;top:192.5px;width:16px;height:32px">28-Jan</div>
<div class="rot" style="left:635px;top:226.5px;width:16px;height:20px">Tue</div>
<div style="left:651px;top:194px;width:16px;height:33px;background:#ddebf7"></div>
<div style="left:651px;top:228px;width:16px;height:21px;background:#ededed"></div>
<div class="rot" style="left:651px;top:192.5px;width:16px;height:32px">29-Jan</div>
<div class="rot" style="left:651px;top:224.5px;width:16px;height:20px">##</div>
<div style="left:667px;top:194px;width:16px;height:33px;background:#ddebf7"></div>
<div style="left:667px;top:228px;width:16px;height:21px;background:#ededed"></div>
<div class="rot" style="left:667px;top:192.5px;width:16px;height:32px">30-Jan</div>
<div class="rot" style="left:667px;top:226.5px;width:16px;height:20px">Thu</div>
<div style="left:683px;top:194px;width:16px;height:33px;background:#ddebf7"></div>
<div style="left:683px;top:228px;width:16px;height:21px;background:#ededed"></div>
<div class="rot" style="left:683px;top:192.5px;width:16px;height:32px">31-Jan</div>
<div class="rot" style="left:683px;top:226.5px;width:16px;height:20px">Fri</div>
<div style="left:699px;top:194px;width:16px;height:33px;background:#e2efda"></div>
<div style="left:699px;top:228px;width:16px;height:21px;background:#e2efda"></div>
<div class="rot" style="left:699px;top:192.5px;width:16px;height:32px">01-Feb</div>
<div class="rot" style="left:699px;top:226.5px;width:16px;height:20px">Sat</div>
<div style="left:715px;top:194px;width:16px;height:33px;background:#e2efda"></div>
<div style="left:715px;top:228px;width:16px;height:21px;background:#e2efda"></div>
<div class="rot" style="left:715px;top:192.5px;width:16px;height:32px">02-Feb</div>
<div class="rot" style="left:715px;top:226.5px;width:16px;height:20px">Sun</div>
<div style="left:731px;top:194px;width:16px;height:33px;background:#ddebf7"></div>
<div style="left:731px;top:228px;width:16px;height:21px;background:#ededed"></div>
<div class="rot" style="left:731px;top:192.5px;width:16px;height:32px">03-Feb</div>
<div class="rot" style="left:731px;top:224.5px;width:16px;height:20px">##</div>
<div style="left:747px;top:194px;width:16px;height:33px;background:#ddebf7"></div>
<div style="left:747px;top:228px;width:16px;height:21px;background:#ededed"></div>
<div class="rot" style="left:747px;top:192.5px;width:16px;height:32px">04-Feb</div>
<div class="rot" style="left:747px;top:226.5px;width:16px;height:20px">Tue</div>
<div style="left:763px;top:194px;width:16px;height:33px;background:#ddebf7"></div>
<div style="left:763px;top:228px;width:16px;height:21px;background:#ededed"></div>
<div class="rot" style="left:763px;top:192.5px;width:16px;height:32px">05-Feb</div>
<div class="rot" style="left:763px;top:224.5px;width:16px;height:20px">##</div>
<div style="left:779px;top:194px;width:16px;height:33px;background:#ddebf7"></div>
<div style="left:779px;top:228px;width:16px;height:21px;background:#ededed"></div>
<div class="rot" style="left:779px;top:192.5px;width:16px;height:32px">06-Feb</div>
<div class="rot" style="left:779px;top:226.5px;width:16px;height:20px">Thu</div>
<div style="left:795px;top:194px;width:16px;height:33px;background:#ddebf7"></div>
<div style="left:795px;top:228px;width:16px;height:21px;background:#ededed"></div>
<div class="rot" style="left:795px;top:192.5px;width:16px;height:32px">07-Feb</div>
<div class="rot" style="left:795px;top:226.5px;width:16px;height:20px">Fri</div>
<div style="left:811px;top:194px;width:16px;height:33px;background:#e2efda"></div>
<div style="left:811px;top:228px;width:16px;height:21px;background:#e2efda"></div>
<div class="rot" style="left:811px;top:192.5px;width:16px;height:32px">08-Feb</div>
<div class="rot" style="left:811px;top:226.5px;width:16px;height:20px">Sat</div>
<div style="left:827px;top:194px;width:16px;height:33px;background:#e2efda"></div>
<div style="left:827px;top:228px;width:16px;height:21px;background:#e2efda"></div>
<div class="rot" style="left:827px;top:192.5px;width:16px;height:32px">09-Feb</div>
<div class="rot" style="left:827px;top:226.5px;width:16px;height:20px">Sun</div>
<div style="left:843px;top:194px;width:16px;height:33px;background:#ddebf7"></div>
<div style="left:843px;top:228px;width:16px;height:21px;background:#ededed"></div>
<div class="rot" style="left:843px;top:192.5px;width:16px;height:32px">10-Feb</div>
<div class="rot" style="left:843px;top:224.5px;width:16px;height:20px">##</div>
<div style="left:859px;top:194px;width:16px;height:33px;background:#ddebf7"></div>
<div style="left:859px;top:228px;width:16px;height:21px;background:#ededed"></div>
<div class="rot" style="left:859px;top:192.5px;width:16px;height:32px">11-Feb</div>
<div class="rot" style="left:859px;top:226.5px;width:16px;height:20px">Tue</div>
<div style="left:875px;top:194px;width:16px;height:33px;background:#ddebf7"></div>
<div style="left:875px;top:228px;width:16px;height:21px;background:#ededed"></div>
<div class="rot" style="left:875px;top:192.5px;width:16px;height:32px">12-Feb</div>
<div class="rot" style="left:875px;top:224.5px;width:16px;height:20px">##</div>
<div style="left:891px;top:194px;width:16px;height:33px;background:#ddebf7"></div>
<div style="left:891px;top:228px;width:16px;height:21px;background:#ededed"></div>
<div class="rot" style="left:891px;top:192.5px;width:16px;height:32px">13-Feb</div>
<div class="rot" style="left:891px;top:226.5px;width:16px;height:20px">Thu</div>
<div style="left:907px;top:194px;width:16px;height:33px;background:#ddebf7"></div>
<div style="left:907px;top:228px;width:16px;height:21px;background:#ededed"></div>
<div class="rot" style="left:907px;top:192.5px;width:16px;height:32px">14-Feb</div>
<div class="rot" style="left:907px;top:226.5px;width:16px;height:20px">Fri</div>
<div style="left:923px;top:194px;width:16px;height:33px;background:#e2efda"></div>
<div style="left:923px;top:228px;width:16px;height:21px;background:#e2efda"></div>
<div class="rot" style="left:923px;top:192.5px;width:16px;height:32px">15-Feb</div>
<div class="rot" style="left:923px;top:226.5px;width:16px;height:20px">Sat</div>
<div style="left:939px;top:194px;width:16px;height:33px;background:#e2efda"></div>
<div style="left:939px;top:228px;width:16px;height:21px;background:#e2efda"></div>
<div class="rot" style="left:939px;top:192.5px;width:16px;height:32px">16-Feb</div>
<div class="rot" style="left:939px;top:226.5px;width:16px;height:20px">Sun</div>
<div style="left:955px;top:194px;width:16px;height:33px;background:#ddebf7"></div>
<div style="left:955px;top:228px;width:16px;height:21px;background:#ededed"></div>
<div class="rot" style="left:955px;top:192.5px;width:16px;height:32px">17-Feb</div>
<div class="rot" style="left:955px;top:224.5px;width:16px;height:20px">##</div>
<div style="left:971px;top:194px;width:16px;height:33px;background:#ddebf7"></div>
<div style="left:971px;top:228px;width:16px;height:21px;background:#ededed"></div>
<div class="rot" style="left:971px;top:192.5px;width:16px;height:32px">18-Feb</div>
<div class="rot" style="left:971px;top:226.5px;width:16px;height:20px">Tue</div>
<div style="left:987px;top:194px;width:16px;height:33px;background:#ddebf7"></div>
<div style="left:987px;top:228px;width:16px;height:21px;background:#ededed"></div>
<div class="rot" style="left:987px;top:192.5px;width:16px;height:32px">19-Feb</div>
<div class="rot" style="left:987px;top:224.5px;width:16px;height:20px">##</div>
<div style="left:1003px;top:194px;width:16px;height:33px;background:#ddebf7"></div>
<div style="left:1003px;top:228px;width:16px;height:21px;background:#ededed"></div>
<div class="rot" style="left:1003px;top:192.5px;width:16px;height:32px">20-Feb</div>
<div class="rot" style="left:1003px;top:226.5px;width:16px;height:20px">Thu</div>
<div style="left:1019px;top:194px;width:16px;height:33px;background:#ddebf7"></div>
<div style="left:1019px;top:228px;width:16px;height:21px;background:#ededed"></div>
<div class="rot" style="left:1019px;top:192.5px;width:16px;height:32px">21-Feb</div>
<div class="rot" style="left:1019px;top:226.5px;width:16px;height:20px">Fri</div>
<div style="left:1035px;top:194px;width:16px;height:33px;background:#e2efda"></div>
<div style="left:1035px;top:228px;width:16px;height:21px;background:#e2efda"></div>
<div class="rot" style="left:1035px;top:192.5px;width:16px;height:32px">22-Feb</div>
<div class="rot" style="left:1035px;top:226.5px;width:16px;height:20px">Sat</div>
<div style="left:1051px;top:194px;width:16px;height:33px;background:#e2efda"></div>
<div style="left:1051px;top:228px;width:16px;height:21px;background:#e2efda"></div>
<div class="rot" style="left:1051px;top:192.5px;width:16px;height:32px">23-Feb</div>
<div class="rot" style="left:1051px;top:226.5px;width:16px;height:20px">Sun</div>
<div style="left:1067px;top:194px;width:16px;height:33px;background:#ddebf7"></div>
<div style="left:1067px;top:228px;width:16px;height:21px;background:#ededed"></div>
<div class="rot" style="left:1067px;top:192.5px;width:16px;height:32px">24-Feb</div>
<div class="rot" style="left:1067px;top:224.5px;width:16px;height:20px">##</div>
<div style="left:1083px;top:194px;width:16px;height:33px;background:#ddebf7"></div>
<div style="left:1083px;top:228px;width:16px;height:21px;background:#ededed"></div>
<div class="rot" style="left:1083px;top:192.5px;width:16px;height:32px">25-Feb</div>
<div class="rot" style="left:1083px;top:226.5px;width:16px;height:20px">Tue</div>
<div style="left:1099px;top:194px;width:16px;height:33px;background:#ddebf7"></div>
<div style="left:1099px;top:228px;width:16px;height:21px;background:#ededed"></div>
<div class="rot" style="left:1099px;top:192.5px;width:16px;height:32px">26-Feb</div>
<div class="rot" style="left:1099px;top:224.5px;width:16px;height:20px">##</div>
<div style="left:1115px;top:194px;width:16px;height:33px;background:#ddebf7"></div>
<div style="left:1115px;top:228px;width:16px;height:21px;background:#ededed"></div>
<div class="rot" style="left:1115px;top:192.5px;width:16px;height:32px">27-Feb</div>
<div class="rot" style="left:1115px;top:226.5px;width:16px;height:20px">Thu</div>
<div style="left:1131px;top:194px;width:16px;height:33px;background:#ddebf7"></div>
<div style="left:1131px;top:228px;width:16px;height:21px;background:#ededed"></div>
<div class="rot" style="left:1131px;top:192.5px;width:16px;height:32px">28-Feb</div>
<div class="rot" style="left:1131px;top:226.5px;width:16px;height:20px">Fri</div>
<div style="left:1147px;top:194px;width:16px;height:33px;background:#e2efda"></div>
<div style="left:1147px;top:228px;width:16px;height:21px;background:#e2efda"></div>
<div class="rot" style="left:1147px;top:192.5px;width:16px;height:32px">29-Feb</div>
<div class="rot" style="left:1147px;top:226.5px;width:16px;height:20px">Sat</div>
<div style="left:1163px;top:194px;width:16px;height:33px;background:#e2efda"></div>
<div style="left:1163px;top:228px;width:16px;height:21px;background:#e2efda"></div>
<div class="rot" style="left:1163px;top:192.5px;width:16px;height:32px">01-Mar</div>
<div class="rot" style="left:1163px;top:226.5px;width:16px;height:20px">Sun</div>
<div style="left:1179px;top:194px;width:16px;height:33px;background:#ddebf7"></div>
<div style="left:1179px;top:228px;width:16px;height:21px;background:#ededed"></div>
<div class="rot" style="left:1179px;top:192.5px;width:16px;height:32px">####</div>
<div class="rot" style="left:1179px;top:224.5px;width:16px;height:20px">##</div>
<div style="left:1195px;top:194px;width:16px;height:33px;background:#ddebf7"></div>
<div style="left:1195px;top:228px;width:16px;height:21px;background:#ededed"></div>
<div class="rot" style="left:1195px;top:192.5px;width:16px;height:32px">####</div>
<div class="rot" style="left:1195px;top:226.5px;width:16px;height:20px">Tue</div>
<div style="left:1211px;top:194px;width:16px;height:33px;background:#ddebf7"></div>
<div style="left:1211px;top:228px;width:16px;height:21px;background:#ededed"></div>
<div class="rot" style="left:1211px;top:192.5px;width:16px;height:32px">####</div>
<div class="rot" style="left:1211px;top:224.5px;width:16px;height:20px">##</div>
<div style="left:1227px;top:194px;width:16px;height:33px;background:#ddebf7"></div>
<div style="left:1227px;top:228px;width:16px;height:21px;background:#ededed"></div>
<div class="rot" style="left:1227px;top:192.5px;width:16px;height:32px">####</div>
<div class="rot" style="left:1227px;top:226.5px;width:16px;height:20px">Thu</div>
<div style="left:1243px;top:194px;width:16px;height:33px;background:#ddebf7"></div>
<div style="left:1243px;top:228px;width:16px;height:21px;background:#ededed"></div>
<div class="rot" style="left:1243px;top:192.5px;width:16px;height:32px">####</div>
<div class="rot" style="left:1243px;top:226.5px;width:16px;height:20px">Fri</div>
<div style="left:1259px;top:194px;width:16px;height:33px;background:#e2efda"></div>
<div style="left:1259px;top:228px;width:16px;height:21px;background:#e2efda"></div>
<div class="rot" style="left:1259px;top:192.5px;width:16px;height:32px">####</div>
<div class="rot" style="left:1259px;top:226.5px;width:16px;height:20px">Sat</div>
<div style="left:1275px;top:194px;width:16px;height:33px;background:#e2efda"></div>
<div style="left:1275px;top:228px;width:16px;height:21px;background:#e2efda"></div>
<div class="rot" style="left:1275px;top:192.5px;width:16px;height:32px">####</div>
<div class="rot" style="left:1275px;top:226.5px;width:16px;height:20px">Sun</div>
<div style="left:1291px;top:194px;width:16px;height:33px;background:#ddebf7"></div>
<div style="left:1291px;top:228px;width:16px;height:21px;background:#ededed"></div>
<div class="rot" style="left:1291px;top:192.5px;width:16px;height:32px">####</div>
<div class="rot" style="left:1291px;top:224.5px;width:16px;height:20px">##</div>
<div style="left:1307px;top:194px;width:16px;height:33px;background:#ddebf7"></div>
<div style="left:1307px;top:228px;width:16px;height:21px;background:#ededed"></div>
<div class="rot" style="left:1307px;top:192.5px;width:16px;height:32px">10-Mar</div>
<div class="rot" style="left:1307px;top:226.5px;width:16px;height:20px">Tue</div>
<div style="left:1323px;top:194px;width:16px;height:33px;background:#ddebf7"></div>
<div style="left:1323px;top:228px;width:16px;height:21px;background:#ededed"></div>
<div class="rot" style="left:1323px;top:192.5px;width:16px;height:32px">11-Mar</div>
<div class="rot" style="left:1323px;top:224.5px;width:16px;height:20px">##</div>
<div style="left:1339px;top:194px;width:16px;height:33px;background:#ddebf7"></div>
<div style="left:1339px;top:228px;width:16px;height:21px;background:#ededed"></div>
<div class="rot" style="left:1339px;top:192.5px;width:16px;height:32px">12-Mar</div>
<div class="rot" style="left:1339px;top:226.5px;width:16px;height:20px">Thu</div>
<div style="left:1355px;top:194px;width:16px;height:33px;background:#ddebf7"></div>
<div style="left:1355px;top:228px;width:16px;height:21px;background:#ededed"></div>
<div class="rot" style="left:1355px;top:192.5px;width:16px;height:32px">13-Mar</div>
<div class="rot" style="left:1355px;top:226.5px;width:16px;height:20px">Fri</div>
<div style="left:1371px;top:194px;width:16px;height:33px;background:#e2efda"></div>
<div style="left:1371px;top:228px;width:16px;height:21px;background:#e2efda"></div>
<div class="rot" style="left:1371px;top:192.5px;width:16px;height:32px">14-Mar</div>
<div class="rot" style="left:1371px;top:226.5px;width:16px;height:20px">Sat</div>
<div style="left:1387px;top:194px;width:16px;height:33px;background:#e2efda"></div>
<div style="left:1387px;top:228px;width:16px;height:21px;background:#e2efda"></div>
<div class="rot" style="left:1387px;top:192.5px;width:16px;height:32px">15-Mar</div>
<div class="rot" style="left:1387px;top:226.5px;width:16px;height:20px">Sun</div>
<div style="left:1403px;top:194px;width:16px;height:33px;background:#ddebf7"></div>
<div style="left:1403px;top:228px;width:16px;height:21px;background:#ededed"></div>
<div class="rot" style="left:1403px;top:192.5px;width:16px;height:32px">16-Mar</div>
<div class="rot" style="left:1403px;top:224.5px;width:16px;height:20px">##</div>
<div style="left:1419px;top:194px;width:16px;height:33px;background:#ddebf7"></div>
<div style="left:1419px;top:228px;width:16px;height:21px;background:#ededed"></div>
<div class="rot" style="left:1419px;top:192.5px;width:16px;height:32px">17-Mar</div>
<div class="rot" style="left:1419px;top:226.5px;width:16px;height:20px">Tue</div>
<div style="left:1435px;top:194px;width:16px;height:33px;background:#ddebf7"></div>
<div style="left:1435px;top:228px;width:16px;height:21px;background:#ededed"></div>
<div class="rot" style="left:1435px;top:192.5px;width:16px;height:32px">18-Mar</div>
<div class="rot" style="left:1435px;top:224.5px;width:16px;height:20px">##</div>
<div style="left:1451px;top:194px;width:16px;height:33px;background:#ddebf7"></div>
<div style="left:1451px;top:228px;width:16px;height:21px;background:#ededed"></div>
<div class="rot" style="left:1451px;top:192.5px;width:16px;height:32px">19-Mar</div>
<div class="rot" style="left:1451px;top:226.5px;width:16px;height:20px">Thu</div>
<div style="left:1467px;top:194px;width:16px;height:33px;background:#ddebf7"></div>
<div style="left:1467px;top:228px;width:16px;height:21px;background:#ededed"></div>
<div class="rot" style="left:1467px;top:192.5px;width:16px;height:32px">####</div>
<div class="rot" style="left:1467px;top:226.5px;width:16px;height:20px">Fri</div>
<div style="left:1483px;top:194px;width:16px;height:33px;background:#e2efda"></div>
<div style="left:1483px;top:228px;width:16px;height:21px;background:#e2efda"></div>
<div class="rot" style="left:1483px;top:192.5px;width:16px;height:32px">21-Mar</div>
<div class="rot" style="left:1483px;top:226.5px;width:16px;height:20px">Sat</div>
<div style="left:1499px;top:194px;width:16px;height:33px;background:#e2efda"></div>
<div style="left:1499px;top:228px;width:16px;height:21px;background:#e2efda"></div>
<div class="rot" style="left:1499px;top:192.5px;width:16px;height:32px">####</div>
<div class="rot" style="left:1499px;top:226.5px;width:16px;height:20px">Sun</div>
<div style="left:1515px;top:194px;width:16px;height:33px;background:#ddebf7"></div>
<div style="left:1515px;top:228px;width:16px;height:21px;background:#ededed"></div>
<div class="rot" style="left:1515px;top:192.5px;width:16px;height:32px">####</div>
<div class="rot" style="left:1515px;top:224.5px;width:16px;height:20px">##</div>
<div style="left:1531px;top:194px;width:16px;height:33px;background:#ddebf7"></div>
<div style="left:1531px;top:228px;width:16px;height:21px;background:#ededed"></div>
<div class="rot" style="left:1531px;top:192.5px;width:16px;height:32px">####</div>
<div class="rot" style="left:1531px;top:226.5px;width:16px;height:20px">Tue</div>
<div style="left:1547px;top:194px;width:16px;height:33px;background:#ddebf7"></div>
<div style="left:1547px;top:228px;width:16px;height:21px;background:#ededed"></div>
<div class="rot" style="left:1547px;top:192.5px;width:16px;height:32px">####</div>
<div class="rot" style="left:1547px;top:224.5px;width:16px;height:20px">##</div>
<div style="left:1563px;top:194px;width:16px;height:33px;background:#ddebf7"></div>
<div style="left:1563px;top:228px;width:16px;height:21px;background:#ededed"></div>
<div class="rot" style="left:1563px;top:192.5px;width:16px;height:32px">####</div>
<div class="rot" style="left:1563px;top:226.5px;width:16px;height:20px">Thu</div>
<div style="left:1579px;top:194px;width:16px;height:33px;background:#ddebf7"></div>
<div style="left:1579px;top:228px;width:16px;height:21px;background:#ededed"></div>
<div class="rot" style="left:1579px;top:192.5px;width:16px;height:32px">####</div>
<div class="rot" style="left:1579px;top:226.5px;width:16px;height:20px">Fri</div>
<div style="left:1595px;top:194px;width:16px;height:33px;background:#e2efda"></div>
<div style="left:1595px;top:228px;width:16px;height:21px;background:#e2efda"></div>
<div class="rot" style="left:1595px;top:192.5px;width:16px;height:32px">####</div>
<div class="rot" style="left:1595px;top:226.5px;width:16px;height:20px">Sat</div>
<div style="left:1611px;top:194px;width:16px;height:33px;background:#e2efda"></div>
<div style="left:1611px;top:228px;width:16px;height:21px;background:#e2efda"></div>
<div class="rot" style="left:1611px;top:192.5px;width:16px;height:32px">####</div>
<div class="rot" style="left:1611px;top:226.5px;width:16px;height:20px">Sun</div>
<div style="left:1627px;top:194px;width:16px;height:33px;background:#ddebf7"></div>
<div style="left:1627px;top:228px;width:16px;height:21px;background:#ededed"></div>
<div class="rot" style="left:1627px;top:192.5px;width:16px;height:32px">####</div>
<div class="rot" style="left:1627px;top:224.5px;width:16px;height:20px">##</div>
<div style="left:1643px;top:194px;width:16px;height:33px;background:#ddebf7"></div>
<div style="left:1643px;top:228px;width:16px;height:21px;background:#ededed"></div>
<div class="rot" style="left:1643px;top:192.5px;width:16px;height:32px">31-Mar</div>
<div class="rot" style="left:1643px;top:226.5px;width:16px;height:20px">Tue</div>
<div style="left:1659px;top:194px;width:16px;height:33px;background:#ddebf7"></div>
<div style="left:1659px;top:228px;width:16px;height:21px;background:#ededed"></div>
<div class="rot" style="left:1659px;top:192.5px;width:16px;height:32px">01-Apr</div>
<div class="rot" style="left:1659px;top:224.5px;width:16px;height:20px">##</div>
<div style="left:1675px;top:194px;width:16px;height:33px;background:#ddebf7"></div>
<div style="left:1675px;top:228px;width:16px;height:21px;background:#ededed"></div>
<div class="rot" style="left:1675px;top:192.5px;width:16px;height:32px">02-Apr</div>
<div class="rot" style="left:1675px;top:226.5px;width:16px;height:20px">Thu</div>
<div style="left:1691px;top:194px;width:16px;height:33px;background:#ddebf7"></div>
<div style="left:1691px;top:228px;width:16px;height:21px;background:#ededed"></div>
<div class="rot" style="left:1691px;top:192.5px;width:16px;height:32px">03-Apr</div>
<div class="rot" style="left:1691px;top:226.5px;width:16px;height:20px">Fri</div>
<div style="left:1707px;top:194px;width:16px;height:33px;background:#e2efda"></div>
<div style="left:1707px;top:228px;width:16px;height:21px;background:#e2efda"></div>
<div class="rot" style="left:1707px;top:192.5px;width:16px;height:32px">04-Apr</div>
<div class="rot" style="left:1707px;top:226.5px;width:16px;height:20px">Sat</div>
<div style="left:1723px;top:194px;width:16px;height:33px;background:#e2efda"></div>
<div style="left:1723px;top:228px;width:16px;height:21px;background:#e2efda"></div>
<div class="rot" style="left:1723px;top:192.5px;width:16px;height:32px">05-Apr</div>
<div class="rot" style="left:1723px;top:226.5px;width:16px;height:20px">Sun</div>
<div style="left:1739px;top:194px;width:16px;height:33px;background:#ddebf7"></div>
<div style="left:1739px;top:228px;width:16px;height:21px;background:#ededed"></div>
<div class="rot" style="left:1739px;top:192.5px;width:16px;height:32px">06-Apr</div>
<div class="rot" style="left:1739px;top:224.5px;width:16px;height:20px">##</div>
<div style="left:1755px;top:194px;width:16px;height:33px;background:#ddebf7"></div>
<div style="left:1755px;top:228px;width:16px;height:21px;background:#ededed"></div>
<div class="rot" style="left:1755px;top:192.5px;width:16px;height:32px">07-Apr</div>
<div class="rot" style="left:1755px;top:226.5px;width:16px;height:20px">Tue</div>
<div style="left:1771px;top:194px;width:16px;height:33px;background:#ddebf7"></div>
<div style="left:1771px;top:228px;width:16px;height:21px;background:#ededed"></div>
<div class="rot" style="left:1771px;top:192.5px;width:16px;height:32px">08-Apr</div>
<div class="rot" style="left:1771px;top:224.5px;width:16px;height:20px">##</div>
<div style="left:1787px;top:194px;width:16px;height:33px;background:#ddebf7"></div>
<div style="left:1787px;top:228px;width:16px;height:21px;background:#ededed"></div>
<div class="rot" style="left:1787px;top:192.5px;width:16px;height:32px">09-Apr</div>
<div class="rot" style="left:1787px;top:226.5px;width:16px;height:20px">Thu</div>
<div style="left:1803px;top:194px;width:16px;height:33px;background:#ddebf7"></div>
<div style="left:1803px;top:228px;width:16px;height:21px;background:#ededed"></div>
<div class="rot" style="left:1803px;top:192.5px;width:16px;height:32px">10-Apr</div>
<div class="rot" style="left:1803px;top:226.5px;width:16px;height:20px">Fri</div>
<div style="left:1819px;top:194px;width:16px;height:33px;background:#e2efda"></div>
<div style="left:1819px;top:228px;width:16px;height:21px;background:#e2efda"></div>
<div class="rot" style="left:1819px;top:192.5px;width:16px;height:32px">11-Apr</div>
<div class="rot" style="left:1819px;top:226.5px;width:16px;height:20px">Sat</div>
<div style="left:1835px;top:194px;width:16px;height:33px;background:#e2efda"></div>
<div style="left:1835px;top:228px;width:16px;height:21px;background:#e2efda"></div>
<div class="rot" style="left:1835px;top:192.5px;width:16px;height:32px">12-Apr</div>
<div class="rot" style="left:1835px;top:226.5px;width:16px;height:20px">Sun</div>
<div style="left:1851px;top:194px;width:16px;height:33px;background:#ddebf7"></div>
<div style="left:1851px;top:228px;width:16px;height:21px;background:#ededed"></div>
<div class="rot" style="left:1851px;top:192.5px;width:16px;height:32px">13-Apr</div>
<div class="rot" style="left:1851px;top:224.5px;width:16px;height:20px">##</div>
<div style="left:1867px;top:194px;width:16px;height:33px;background:#ddebf7"></div>
<div style="left:1867px;top:228px;width:16px;height:21px;background:#ededed"></div>
<div class="rot" style="left:1867px;top:192.5px;width:16px;height:32px">14-Apr</div>
<div class="rot" style="left:1867px;top:226.5px;width:16px;height:20px">Tue</div>
<div style="left:1883px;top:194px;width:16px;height:33px;background:#ddebf7"></div>
<div style="left:1883px;top:228px;width:16px;height:21px;background:#ededed"></div>
<div class="rot" style="left:1883px;top:192.5px;width:16px;height:32px">15-Apr</div>
<div class="rot" style="left:1883px;top:224.5px;width:16px;height:20px">##</div>
<div style="left:283px;top:193px;width:1615px;height:1px;background:#000"></div>
<div style="left:283px;top:227px;width:1615px;height:1px;background:#000"></div>
<div class="vl" style="left:283px;top:193px;height:836px"></div>
<div class="vl" style="left:363px;top:193px;height:836px"></div>
<div class="vl" style="left:395px;top:193px;height:836px"></div>
<div class="vl" style="left:475px;top:193px;height:71px"></div>
<div class="vl" style="left:475px;top:277px;height:197px"></div>
<div class="vl" style="left:475px;top:487px;height:542px"></div>
<div class="vl" style="left:507px;top:193px;height:71px"></div>
<div class="vl" style="left:507px;top:277px;height:1px"></div>
<div class="vl" style="left:507px;top:291px;height:183px"></div>
<div class="vl" style="left:507px;top:487px;height:542px"></div>
<div class="vl" style="left:587px;top:193px;height:836px"></div>
<div class="vl" style="left:619px;top:193px;height:295px"></div>
<div class="vl" style="left:619px;top:501px;height:528px"></div>
<div class="vl" style="left:699px;top:193px;height:836px"></div>
<div class="vl" style="left:731px;top:193px;height:836px"></div>
<div class="vl" style="left:811px;top:193px;height:836px"></div>
<div class="vl" style="left:843px;top:193px;height:836px"></div>
<div class="vl" style="left:923px;top:193px;height:836px"></div>
<div class="vl" style="left:955px;top:193px;height:836px"></div>
<div class="vl" style="left:1035px;top:193px;height:836px"></div>
<div class="vl" style="left:1067px;top:193px;height:836px"></div>
<div class="vl" style="left:1147px;top:193px;height:836px"></div>
<div class="vl" style="left:1179px;top:193px;height:836px"></div>
<div class="vl" style="left:1259px;top:193px;height:836px"></div>
<div class="vl" style="left:1291px;top:193px;height:836px"></div>
<div class="vl" style="left:1371px;top:193px;height:836px"></div>
<div class="vl" style="left:1403px;top:193px;height:836px"></div>
<div class="vl" style="left:1483px;top:193px;height:836px"></div>
<div class="vl" style="left:1515px;top:193px;height:836px"></div>
<div class="vl" style="left:1595px;top:193px;height:836px"></div>
<div class="vl" style="left:1627px;top:193px;height:836px"></div>
<div class="vl" style="left:1707px;top:193px;height:836px"></div>
<div class="vl" style="left:1739px;top:193px;height:836px"></div>
<div class="vl" style="left:1819px;top:193px;height:836px"></div>
<div class="vl" style="left:1851px;top:193px;height:836px"></div>
<div style="left:215px;top:340px;width:68px;height:30px;font-size:10px;font-weight:bold;letter-spacing:0.9px;text-align:center;line-height:14px;-webkit-text-stroke:0.2px #000">START-UP<br>/ MOBILISE</div>
<div style="left:215px;top:557px;width:68px;height:15px;font-size:10px;font-weight:bold;letter-spacing:0.7px;text-align:center;line-height:14px;-webkit-text-stroke:0.2px #000">DISCOVERY</div>
<div style="left:215px;top:760px;width:68px;height:30px;font-size:10px;font-weight:bold;letter-spacing:0.8px;text-align:center;line-height:14px;-webkit-text-stroke:0.2px #000">BUILD /<br>TEST</div>
<div style="left:215px;top:978px;width:68px;height:15px;font-size:10px;font-weight:bold;letter-spacing:0.8px;text-align:center;line-height:14px;-webkit-text-stroke:0.2px #000">DEPLOY</div>
<div style="left:27px;top:124px;width:187px;height:13px;background:#e7e6e6"></div>
<div style="left:215px;top:124px;width:68px;height:13px;background:#e7e6e6"></div>
<div style="left:284px;top:124px;width:80px;height:13px;background:#e7e6e6"></div>
<div style="left:396px;top:124px;width:79px;height:13px;background:#e7e6e6"></div>
<div style="left:26px;top:137px;width:338px;height:1px;background:#000"></div>
<div style="left:395px;top:137px;width:81px;height:1px;background:#000"></div>
<div style="left:27px;top:138px;width:187px;height:13px;background:#ddebf7"></div>
<div style="left:215px;top:138px;width:68px;height:13px;background:#00b050"></div>
<div style="left:284px;top:138px;width:80px;height:13px;background:#ddebf7"></div>
<div style="left:396px;top:138px;width:79px;height:13px;background:#ddebf7"></div>
<div style="left:26px;top:151px;width:338px;height:1px;background:#000"></div>
<div style="left:395px;top:151px;width:81px;height:1px;background:#000"></div>
<div style="left:214px;top:124px;width:1px;height:28px;background:#000"></div>
<div style="left:283px;top:124px;width:1px;height:28px;background:#000"></div>
<div style="left:363px;top:124px;width:1px;height:28px;background:#000"></div>
<div style="left:395px;top:137px;width:1px;height:15px;background:#000"></div>
<div style="left:475px;top:137px;width:1px;height:15px;background:#000"></div>
<div class="c b" style="left:29px;top:124px;width:184px">Project:</div>
<div class="c" style="left:30px;top:138px;width:184px;font-size:10px;letter-spacing:0.3px">&lt;project-name&gt;</div>
<div class="c b" style="left:216px;top:124px;width:67px">RAG Status:</div>
<div class="c b" style="left:286px;top:124px;width:90px">Project Start:</div>
<div class="c b" style="left:398px;top:124px;width:90px;letter-spacing:0.8px">Last Updated:</div>
<div class="c b" style="left:217px;top:138px;width:66px;color:#0b2a12">Green</div>
<div class="c b" style="left:284px;top:138px;width:80px;text-align:center;font-size:9.5px;letter-spacing:0.4px">############</div>
<div class="c b" style="left:396px;top:138px;width:80px;text-align:center;font-size:9.5px;letter-spacing:0.4px">############</div>
<div style="left:214px;top:165px;width:70px;height:85px;border:1px solid #000;border-bottom:none"></div>
<div style="left:215px;top:166px;width:68px;height:13px;background:#d9d9d9"></div>
<div style="left:215px;top:180px;width:68px;height:13px;background:#b4c6e7"></div>
<div style="left:215px;top:194px;width:68px;height:55px;background:#bdd7ee"></div>
<div style="left:214px;top:179px;width:70px;height:1px;background:#000"></div>
<div style="left:214px;top:193px;width:70px;height:1px;background:#000"></div>
<div style="left:214px;top:227px;width:70px;height:1px;background:#000"></div>
<div class="c" style="left:217px;top:166px;width:66px">Week</div>
<div class="c" style="left:217px;top:180px;width:66px">Sprint (2 wks)</div>
<div class="c" style="left:217px;top:213px;width:66px">Date</div>
<div class="c" style="left:217px;top:235px;width:66px">Day</div>
<div style="left:283px;top:165px;width:81px;height:15px;background:#f4b084;border:1px solid #000;font-size:10.3px;font-weight:bold;letter-spacing:0.2px;text-align:center;line-height:13px;-webkit-text-stroke:0.2px #000">WEEK 1</div>
<div style="left:395px;top:165px;width:81px;height:15px;background:#f4b084;border:1px solid #000;font-size:10.3px;font-weight:bold;letter-spacing:0.2px;text-align:center;line-height:13px;-webkit-text-stroke:0.2px #000">WEEK 2</div>
<div style="left:507px;top:165px;width:81px;height:15px;background:#f4b084;border:1px solid #000;font-size:10.3px;font-weight:bold;letter-spacing:0.2px;text-align:center;line-height:13px;-webkit-text-stroke:0.2px #000">WEEK 3</div>
<div style="left:619px;top:165px;width:81px;height:15px;background:#f4b084;border:1px solid #000;font-size:10.3px;font-weight:bold;letter-spacing:0.2px;text-align:center;line-height:13px;-webkit-text-stroke:0.2px #000">WEEK 4</div>
<div style="left:731px;top:165px;width:81px;height:15px;background:#f4b084;border:1px solid #000;font-size:10.3px;font-weight:bold;letter-spacing:0.2px;text-align:center;line-height:13px;-webkit-text-stroke:0.2px #000">WEEK 5</div>
<div style="left:843px;top:165px;width:81px;height:15px;background:#f4b084;border:1px solid #000;font-size:10.3px;font-weight:bold;letter-spacing:0.2px;text-align:center;line-height:13px;-webkit-text-stroke:0.2px #000">WEEK 6</div>
<div style="left:955px;top:165px;width:81px;height:15px;background:#f4b084;border:1px solid #000;font-size:10.3px;font-weight:bold;letter-spacing:0.2px;text-align:center;line-height:13px;-webkit-text-stroke:0.2px #000">WEEK 7</div>
<div style="left:1067px;top:165px;width:81px;height:15px;background:#f4b084;border:1px solid #000;font-size:10.3px;font-weight:bold;letter-spacing:0.2px;text-align:center;line-height:13px;-webkit-text-stroke:0.2px #000">WEEK 8</div>
<div style="left:1179px;top:165px;width:81px;height:15px;background:#f4b084;border:1px solid #000;font-size:10.3px;font-weight:bold;letter-spacing:0.2px;text-align:center;line-height:13px;-webkit-text-stroke:0.2px #000">WEEK 9</div>
<div style="left:1291px;top:165px;width:81px;height:15px;background:#f4b084;border:1px solid #000;font-size:10.3px;font-weight:bold;letter-spacing:0.2px;text-align:center;line-height:13px;-webkit-text-stroke:0.2px #000">WEEK 10</div>
<div style="left:1403px;top:165px;width:81px;height:15px;background:#f4b084;border:1px solid #000;font-size:10.3px;font-weight:bold;letter-spacing:0.2px;text-align:center;line-height:13px;-webkit-text-stroke:0.2px #000">WEEK 11</div>
<div style="left:1515px;top:165px;width:81px;height:15px;background:#f4b084;border:1px solid #000;font-size:10.3px;font-weight:bold;letter-spacing:0.2px;text-align:center;line-height:13px;-webkit-text-stroke:0.2px #000">WEEK 12</div>
<div style="left:1627px;top:165px;width:81px;height:15px;background:#f4b084;border:1px solid #000;font-size:10.3px;font-weight:bold;letter-spacing:0.2px;text-align:center;line-height:13px;-webkit-text-stroke:0.2px #000">WEEK 13</div>
<div style="left:1739px;top:165px;width:81px;height:15px;background:#f4b084;border:1px solid #000;font-size:10.3px;font-weight:bold;letter-spacing:0.2px;text-align:center;line-height:13px;-webkit-text-stroke:0.2px #000">WEEK 14</div>
<div style="left:1851px;top:165px;width:81px;height:15px;background:#f4b084;border:1px solid #000;font-size:10.3px;font-weight:bold;letter-spacing:0.2px;text-align:center;line-height:13px;-webkit-text-stroke:0.2px #000">WEEK 15</div>
<div style="left:283px;top:179px;width:193px;height:15px;background:#d9e1f2;border:1px solid #000;font-size:10.3px;font-weight:bold;letter-spacing:0.6px;text-align:center;line-height:13px;color:#7030a0;-webkit-text-stroke:0.2px #7030a0">SPRINT 0</div>
<div style="left:507px;top:179px;width:193px;height:15px;background:#d9e1f2;border:1px solid #000;font-size:10.3px;font-weight:bold;letter-spacing:0.6px;text-align:center;line-height:13px;color:#7030a0;-webkit-text-stroke:0.2px #7030a0">SPRINT 1</div>
<div style="left:731px;top:179px;width:193px;height:15px;background:#d9e1f2;border:1px solid #000;font-size:10.3px;font-weight:bold;letter-spacing:0.6px;text-align:center;line-height:13px;color:#7030a0;-webkit-text-stroke:0.2px #7030a0">SPRINT 2</div>
<div style="left:955px;top:179px;width:193px;height:15px;background:#d9e1f2;border:1px solid #000;font-size:10.3px;font-weight:bold;letter-spacing:0.6px;text-align:center;line-height:13px;color:#7030a0;-webkit-text-stroke:0.2px #7030a0">SPRINT 3</div>
<div style="left:1179px;top:179px;width:193px;height:15px;background:#d9e1f2;border:1px solid #000;font-size:10.3px;font-weight:bold;letter-spacing:0.6px;text-align:center;line-height:13px;color:#7030a0;-webkit-text-stroke:0.2px #7030a0">SPRINT 4</div>
<div style="left:1403px;top:179px;width:193px;height:15px;background:#d9e1f2;border:1px solid #000;font-size:10.3px;font-weight:bold;letter-spacing:0.6px;text-align:center;line-height:13px;color:#7030a0;-webkit-text-stroke:0.2px #7030a0">SPRINT 5</div>
<div style="left:1627px;top:179px;width:193px;height:15px;background:#d9e1f2;border:1px solid #000;font-size:10.3px;font-weight:bold;letter-spacing:0.6px;text-align:center;line-height:13px;color:#7030a0;-webkit-text-stroke:0.2px #7030a0">SPRINT 6</div>
<div style="left:1851px;top:179px;width:193px;height:15px;background:#d9e1f2;border:1px solid #000;font-size:10.3px;font-weight:bold;letter-spacing:0.6px;text-align:center;line-height:13px;color:#7030a0;-webkit-text-stroke:0.2px #7030a0">SPRINT 7</div>
<div class="c" style="left:1855px;top:250px;width:14px">bh</div>
<div class="c" style="left:1807px;top:250px;width:14px">bh</div>
<div class="c b" style="left:29px;top:250px;width:185px;letter-spacing:0.75px">Comments / Issues / Dependencies</div>
<div class="c" style="left:30px;top:278px;width:184px">Dependency on task 1 etc. etc.</div>
<div class="c" style="left:30px;top:474px;width:184px">Kick off meeting (TBC) etc. etc.</div>
<div style="left:299px;top:263px;width:161px;height:15px;background:linear-gradient(to right,#b4c6e7 0,#b4c6e7 32px,#d9e1f2 32px);border:1px solid #000"></div><div class="c" style="left:302px;top:265px;width:157px;font-size:9px">Start-Up Example Bar Task 1</div><div class="c" style="left:462px;top:265px;width:150px;font-size:9px">Mark Whitfield</div>
<div style="left:331px;top:277px;width:161px;height:15px;background:linear-gradient(to right,#b4c6e7 0,#b4c6e7 96px,#d9e1f2 96px);border:1px solid #000"></div><div class="c" style="left:334px;top:279px;width:157px;font-size:9px">Start-Up Example Bar Task 2</div><div class="c" style="left:494px;top:279px;width:150px;font-size:9px">Robert Pacino</div>
<div style="left:299px;top:473px;width:161px;height:15px;background:linear-gradient(to right,#c6e0b4 0,#c6e0b4 112px,#e2efda 112px);border:1px solid #000"></div><div class="c" style="left:302px;top:475px;width:157px;font-size:9px">Discovery Example Bar Task 1</div><div class="c" style="left:462px;top:475px;width:150px;font-size:9px">Glenn Garry</div>
<div style="left:443px;top:487px;width:161px;height:15px;background:linear-gradient(to right,#c6e0b4 0,#c6e0b4 16px,#e2efda 16px);border:1px solid #000"></div><div class="c" style="left:446px;top:489px;width:157px;font-size:9px">Discovery Example Bar Task 2</div><div class="c" style="left:606px;top:489px;width:150px;font-size:9px">Glenn Ross</div>
<div style="left:26px;top:374px;width:190px;height:17px;border:2px solid #217346"></div>
<div style="left:211px;top:387px;width:5px;height:5px;background:#217346;border:1px solid #fff"></div>
</div>
<div style="left:1898px;top:111px;width:1px;height:918px;background:#a6a6a6"></div>
<div style="left:0;top:1029px;width:1920px;height:29px;background:#e6e6e6;border-top:1px solid #c6c6c6;border-bottom:1px solid #cfcfcf"></div>
<div style="left:26px;top:1038px;width:0;height:0;border-top:4px solid transparent;border-bottom:4px solid transparent;border-right:4px solid #bdbdbd"></div>
<div style="left:56px;top:1038px;width:0;height:0;border-top:4px solid transparent;border-bottom:4px solid transparent;border-left:4px solid #bdbdbd"></div>
<div style="left:100px;top:1029px;width:116px;height:25px;background:#fff;border-left:1px solid #bdbdbd;border-right:1px solid #bdbdbd;border-bottom:2px solid #217346"></div>
<div style="left:112px;top:1034px;font-size:13px;font-weight:bold;color:#217346;line-height:17px">TemplatePOaP</div>
<div style="left:230px;top:1034px;font-size:13px;color:#444;line-height:17px">MonthlyCalc</div>
<div style="left:330px;top:1034px;font-size:13px;color:#444;line-height:17px">PivotCalc</div>
<div style="left:410px;top:1034px;font-size:13px;color:#444;line-height:17px">ChartsCalc</div>
<div style="left:488px;top:1032px;width:65px;height:22px;background:#ffe699"></div>
<div style="left:498px;top:1034px;font-size:13px;color:#222;line-height:17px">Version</div>
<div style="left:316px;top:1033px;width:1px;height:20px;background:#a6a6a6"></div>
<div style="left:397px;top:1033px;width:1px;height:20px;background:#a6a6a6"></div>
<div style="left:485px;top:1033px;width:1px;height:20px;background:#a6a6a6"></div>
<div style="left:555px;top:1033px;width:1px;height:20px;background:#a6a6a6"></div>
<svg style="position:absolute;left:588px;top:1034px" width="18" height="18"><g fill="none" stroke="#666" stroke-width="1.1"><circle cx="9" cy="9" r="7.5"/><path d="M9 5 V13 M5 9 H13" stroke-width="1.5"/></g></svg>
<div style="left:1152px;top:1037px;width:2px;height:2px;background:#999"></div>
<div style="left:1152px;top:1041px;width:2px;height:2px;background:#999"></div>
<div style="left:1152px;top:1045px;width:2px;height:2px;background:#999"></div>
<div style="left:1169px;top:1036px;width:727px;height:15px;background:#dadada"></div>
<div style="left:1169px;top:1035px;width:15px;height:17px;background:#fff;border:1px solid #c6c6c6"></div>
<div style="left:1174px;top:1039px;width:0;height:0;border-top:4px solid transparent;border-bottom:4px solid transparent;border-right:4px solid #444"></div>
<div style="left:1184px;top:1035px;width:64px;height:17px;background:#fff;border:1px solid #c6c6c6"></div>
<div style="left:1881px;top:1036px;width:15px;height:16px;background:#fff;border:1px solid #c6c6c6"></div>
<div style="left:1887px;top:1040px;width:0;height:0;border-top:4px solid transparent;border-bottom:4px solid transparent;border-left:4px solid #444"></div>
<div style="left:0;top:1058px;width:1920px;height:22px;background:#f3f2f1"></div>
<div style="left:1620px;top:1058px;width:40px;height:21px;background:#c8c6c4"></div>
<svg style="position:absolute;left:1632px;top:1060px" width="16" height="16"><g fill="none" stroke="#333" stroke-width="1.3"><rect x="1.5" y="1.5" width="12" height="12"/><path d="M5.5 1.5 V13.5 M9.5 1.5 V13.5 M1.5 5.5 H13.5 M1.5 9.5 H13.5"/></g></svg>
<svg style="position:absolute;left:1672px;top:1060px" width="16" height="16"><g fill="none" stroke="#333" stroke-width="1.1"><rect x="1.5" y="1.5" width="13" height="12"/><rect x="4.5" y="4.5" width="7" height="6.5"/><path d="M6 6.5 H10 M6 8.3 H10 M6 10 H10" stroke-width="0.9"/></g></svg>
<svg style="position:absolute;left:1712px;top:1060px" width="16" height="16"><g fill="none" stroke="#333" stroke-width="1.1"><rect x="1.5" y="1.5" width="13" height="12"/><path d="M1.5 8 H9 V1.5 M5.3 1.5 V8"/></g></svg>
<div style="left:1746px;top:1067px;width:8px;height:1px;background:#444"></div>
<div style="left:1759px;top:1068px;width:100px;height:1px;background:#a6a6a6"></div>
<div style="left:1809px;top:1065px;width:1px;height:6px;background:#a6a6a6"></div>
<div style="left:1791px;top:1062px;width:5px;height:11px;background:#666"></div>
<div style="left:1864px;top:1067px;width:9px;height:1px;background:#444"></div>
<div style="left:1868px;top:1063px;width:1px;height:9px;background:#444"></div>
<div style="left:1884px;top:1061px;font-size:12px;color:#444;line-height:14px">70%</div>
<div style="left:1899px;top:111px;width:21px;height:918px;background:#e6e6e6"></div>
<div style="left:1902px;top:129px;width:14px;height:888px;background:#dadada"></div>
<div style="left:1902px;top:113px;width:14px;height:15px;background:#fff;border:1px solid #c6c6c6"></div>
<div style="left:1905px;top:118px;width:0;height:0;border-left:4px solid transparent;border-right:4px solid transparent;border-bottom:4px solid #555"></div>
<div style="left:1902px;top:129px;width:14px;height:647px;background:#fff;border:1px solid #c6c6c6"></div>
<div style="left:1902px;top:1013px;width:14px;height:15px;background:#fff;border:1px solid #c6c6c6"></div>
<div style="left:1905px;top:1019px;width:0;height:0;border-left:4px solid transparent;border-right:4px solid transparent;border-top:4px solid #555"></div>
</body></html>
